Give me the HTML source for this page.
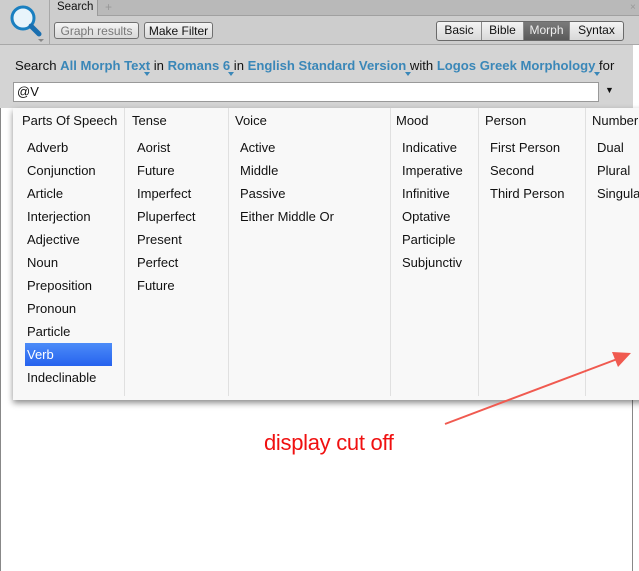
<!DOCTYPE html>
<html><head><style>
body{margin:0;width:639px;height:571px;position:relative;overflow:hidden;background:#fff;font-family:"Liberation Sans",sans-serif;font-size:12.5px;color:#111}
.abs{position:absolute}
.top{left:0;top:0;width:639px;height:44px;background:#cdcdcd;border-bottom:1px solid #a8a8a8}
.tabstrip{left:50px;top:0;width:589px;height:15px;background:#b9b9b9;border-bottom:1px solid #a0a0a0}
.tab{left:50px;top:0;width:48px;height:16px;background:#cdcdcd;border-right:1px solid #9a9a9a;font-size:11.5px;line-height:14px;padding-left:7px;box-sizing:border-box}
.btn{height:17px;border:1px solid #707070;border-radius:3px;background:linear-gradient(#f4f4f4,#d9d9d9);font-size:12px;line-height:16px;padding:0;box-sizing:border-box;text-align:center;white-space:nowrap}
.seg{top:21px;height:18px;border:1px solid #6a6a6a;border-radius:3px;display:flex;font-size:12px;line-height:17px;left:436px;overflow:hidden;background:linear-gradient(#f4f4f4,#d8d8d8)}
.seg div{border-right:1px solid #8a8a8a;text-align:center;box-sizing:border-box}
.mid{left:0;top:45px;width:633px;height:63px;background:#d4d4d4}
.lnk{color:#3a87b8;font-weight:bold}
.pop{left:13px;top:108px;width:640px;height:292px;background:#f8f8f8;box-shadow:0 3px 6px rgba(0,0,0,.45)}
.col{position:absolute;top:0;height:288px;border-right:1px solid #e0e0e0}
.h{position:absolute;top:5px;font-size:13px}
.it{position:absolute;font-size:13px;top:0}
</style></head><body>
<div class="abs" style="left:0;top:0;width:1px;height:571px;background:#888"></div>
<div class="abs" style="left:632px;top:0;width:1px;height:571px;background:#888"></div>
<div class="abs top"></div>
<div class="abs tabstrip"></div>
<div class="abs" style="left:49px;top:0;width:1px;height:44px;background:#a8a8a8"></div>
<div class="abs tab">Search</div>
<div class="abs" style="left:105px;top:0;color:#999;font-size:12px">+</div>
<div class="abs" style="left:630px;top:2px;color:#999;font-size:10px">×</div>
<svg class="abs" style="left:8px;top:4px" width="40" height="40"><circle cx="15" cy="14" r="11" fill="#e8f4fb" stroke="#1a7fc0" stroke-width="3"/><line x1="23" y1="22" x2="31" y2="30" stroke="#1a6fb0" stroke-width="5" stroke-linecap="round"/><polygon points="30,35 36,35 33,38" fill="#888"/></svg>
<div class="abs btn" style="left:54px;top:22px;width:85px;color:#777">Graph results</div>
<div class="abs btn" style="left:144px;top:22px;width:69px">Make Filter</div>
<div class="abs seg" style="top:21px"><div style="width:45px">Basic</div><div style="width:42px">Bible</div><div style="width:46px;background:linear-gradient(#7a7a7a,#5a5a5a);color:#eee">Morph</div><div style="width:53px;border:none">Syntax</div></div>
<div class="abs mid"></div>
<div class="abs" style="left:15px;top:58px;font-size:13.1px;white-space:nowrap">Search <span class="lnk">All Morph Text</span> in <span class="lnk">Romans 6</span> in <span class="lnk">English Standard Version</span> with <span class="lnk">Logos Greek Morphology</span> for</div>
<svg class="abs" style="left:0;top:72px" width="639" height="6"><g fill="#3a87b8"><polygon points="144,0 150,0 147,4"/><polygon points="228,0 234,0 231,4"/><polygon points="405,0 411,0 408,4"/><polygon points="594,0 600,0 597,4"/></g></svg>
<div class="abs" style="left:13px;top:82px;width:586px;height:20px;background:#fff;border:1px solid #999;box-sizing:border-box;font-size:13px;line-height:18px;padding-left:3px">@V</div>
<div class="abs" style="left:605px;top:85px;font-size:9px">▼</div>
<div class="abs pop">
<div class="col" style="left:0;width:111px">
<div class="h" style="left:9px">Parts Of Speech</div>
<div class="abs" style="left:12px;top:235px;width:87px;height:23px;background:linear-gradient(#4c8cf8,#2662ee)"></div>
<div class="it" style="left:14px;top:32px">Adverb</div><div class="it" style="left:14px;top:55px">Conjunction</div><div class="it" style="left:14px;top:78px">Article</div><div class="it" style="left:14px;top:101px">Interjection</div><div class="it" style="left:14px;top:124px">Adjective</div><div class="it" style="left:14px;top:147px">Noun</div><div class="it" style="left:14px;top:170px">Preposition</div><div class="it" style="left:14px;top:193px">Pronoun</div><div class="it" style="left:14px;top:216px">Particle</div><div class="it" style="left:14px;top:239px;color:#fff">Verb</div><div class="it" style="left:14px;top:262px">Indeclinable</div>
</div>
<div class="col" style="left:112px;width:103px">
<div class="h" style="left:7px">Tense</div>
<div class="it" style="left:12px;top:32px">Aorist</div><div class="it" style="left:12px;top:55px">Future</div><div class="it" style="left:12px;top:78px">Imperfect</div><div class="it" style="left:12px;top:101px">Pluperfect</div><div class="it" style="left:12px;top:124px">Present</div><div class="it" style="left:12px;top:147px">Perfect</div><div class="it" style="left:12px;top:170px">Future</div>
</div>
<div class="col" style="left:216px;width:161px">
<div class="h" style="left:6px">Voice</div>
<div class="it" style="left:11px;top:32px">Active</div><div class="it" style="left:11px;top:55px">Middle</div><div class="it" style="left:11px;top:78px">Passive</div><div class="it" style="left:11px;top:101px">Either Middle Or</div>
</div>
<div class="col" style="left:378px;width:87px">
<div class="h" style="left:5px">Mood</div>
<div class="it" style="left:11px;top:32px">Indicative</div><div class="it" style="left:11px;top:55px">Imperative</div><div class="it" style="left:11px;top:78px">Infinitive</div><div class="it" style="left:11px;top:101px">Optative</div><div class="it" style="left:11px;top:124px">Participle</div><div class="it" style="left:11px;top:147px">Subjunctiv</div>
</div>
<div class="col" style="left:466px;width:106px">
<div class="h" style="left:6px">Person</div>
<div class="it" style="left:11px;top:32px">First Person</div><div class="it" style="left:11px;top:55px">Second</div><div class="it" style="left:11px;top:78px">Third Person</div>
</div>
<div class="col" style="left:573px;width:80px;border:none">
<div class="h" style="left:6px">Number</div>
<div class="it" style="left:11px;top:32px">Dual</div><div class="it" style="left:11px;top:55px">Plural</div><div class="it" style="left:11px;top:78px">Singular</div>
</div>
</div>
<svg class="abs" style="left:0;top:0" width="639" height="571"><line x1="445" y1="424" x2="620" y2="358" stroke="#f05a50" stroke-width="2"/><polygon points="631,353 612,352 618,367" fill="#f05a50"/></svg>
<div class="abs" style="left:264px;top:430px;font-size:22px;color:#f01010;letter-spacing:-0.3px">display cut off</div>
</body></html>
